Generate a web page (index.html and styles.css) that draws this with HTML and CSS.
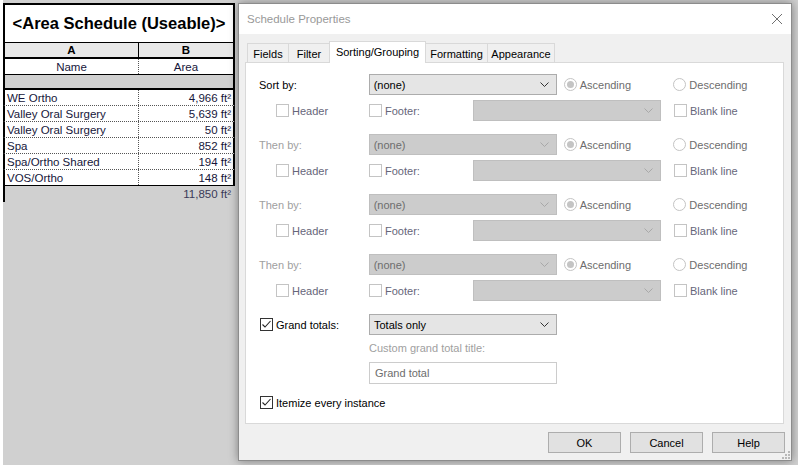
FILE: index.html
```html
<!DOCTYPE html>
<html lang="en">
<head>
<meta charset="UTF-8">
<title>Schedule Properties</title>
<link rel="stylesheet" href="styles.css">
</head>
<body>
<div class="workspace">
  <div class="schedule-pane">
    <div class="schedule">
      <div class="sched-title">&lt;Area Schedule (Useable)&gt;</div>
      <div class="sched-row sched-letters"><span>A</span><span>B</span></div>
      <div class="sched-row sched-heads"><span>Name</span><span>Area</span></div>
      <div class="sched-blank"></div>
      <div class="sched-row sched-data"><span>WE Ortho</span><span>4,966 ft²</span></div>
      <div class="sched-row sched-data"><span>Valley Oral Surgery</span><span>5,639 ft²</span></div>
      <div class="sched-row sched-data"><span>Valley Oral Surgery</span><span>50 ft²</span></div>
      <div class="sched-row sched-data"><span>Spa</span><span>852 ft²</span></div>
      <div class="sched-row sched-data"><span>Spa/Ortho Shared</span><span>194 ft²</span></div>
      <div class="sched-row sched-data last"><span>VOS/Ortho</span><span>148 ft²</span></div>
      <div class="sched-total"><span></span><span>11,850 ft²</span></div>
    </div>
  </div>

  <div class="dialog">
    <div class="titlebar">
      <span>Schedule Properties</span>
      <svg class="close" width="10" height="10" viewBox="0 0 10 10"><path d="M0 0L10 10M10 0L0 10" stroke="#707070" stroke-width="1" fill="none"/></svg>
    </div>
    <div class="dialog-body">
      <div class="tabs">
        <div class="tab t-fields">Fields</div>
        <div class="tab t-filter">Filter</div>
        <div class="tab t-sorting active">Sorting/Grouping</div>
        <div class="tab t-format">Formatting</div>
        <div class="tab t-appear">Appearance</div>
      </div>
      <div class="panel">
        <div class="sort-group">
          <div class="sort-row">
            <span class="sort-label">Sort by:</span>
            <div class="select"><span>(none)</span><svg width="9" height="5" viewBox="0 0 9 5"><path d="M0.5 0.5L4.5 4.5L8.5 0.5" stroke="#333" fill="none"/></svg></div>
            <span class="radio checked"><i class="dot"></i>Ascending</span>
            <span class="radio"><i class="dot"></i>Descending</span>
          </div>
          <div class="sort-row">
            <span class="check header"><i class="box"></i>Header</span>
            <span class="check footer"><i class="box"></i>Footer:</span>
            <div class="select off wide"><span></span><svg width="9" height="5" viewBox="0 0 9 5"><path d="M0.5 0.5L4.5 4.5L8.5 0.5" stroke="#a8a8a8" fill="none"/></svg></div>
            <span class="check blank"><i class="box"></i>Blank line</span>
          </div>
        </div>

        <div class="sort-group">
          <div class="sort-row">
            <span class="sort-label off">Then by:</span>
            <div class="select off"><span>(none)</span><svg width="9" height="5" viewBox="0 0 9 5"><path d="M0.5 0.5L4.5 4.5L8.5 0.5" stroke="#a8a8a8" fill="none"/></svg></div>
            <span class="radio checked"><i class="dot"></i>Ascending</span>
            <span class="radio"><i class="dot"></i>Descending</span>
          </div>
          <div class="sort-row">
            <span class="check header"><i class="box"></i>Header</span>
            <span class="check footer"><i class="box"></i>Footer:</span>
            <div class="select off wide"><span></span><svg width="9" height="5" viewBox="0 0 9 5"><path d="M0.5 0.5L4.5 4.5L8.5 0.5" stroke="#a8a8a8" fill="none"/></svg></div>
            <span class="check blank"><i class="box"></i>Blank line</span>
          </div>
        </div>

        <div class="sort-group">
          <div class="sort-row">
            <span class="sort-label off">Then by:</span>
            <div class="select off"><span>(none)</span><svg width="9" height="5" viewBox="0 0 9 5"><path d="M0.5 0.5L4.5 4.5L8.5 0.5" stroke="#a8a8a8" fill="none"/></svg></div>
            <span class="radio checked"><i class="dot"></i>Ascending</span>
            <span class="radio"><i class="dot"></i>Descending</span>
          </div>
          <div class="sort-row">
            <span class="check header"><i class="box"></i>Header</span>
            <span class="check footer"><i class="box"></i>Footer:</span>
            <div class="select off wide"><span></span><svg width="9" height="5" viewBox="0 0 9 5"><path d="M0.5 0.5L4.5 4.5L8.5 0.5" stroke="#a8a8a8" fill="none"/></svg></div>
            <span class="check blank"><i class="box"></i>Blank line</span>
          </div>
        </div>

        <div class="sort-group">
          <div class="sort-row">
            <span class="sort-label off">Then by:</span>
            <div class="select off"><span>(none)</span><svg width="9" height="5" viewBox="0 0 9 5"><path d="M0.5 0.5L4.5 4.5L8.5 0.5" stroke="#a8a8a8" fill="none"/></svg></div>
            <span class="radio checked"><i class="dot"></i>Ascending</span>
            <span class="radio"><i class="dot"></i>Descending</span>
          </div>
          <div class="sort-row">
            <span class="check header"><i class="box"></i>Header</span>
            <span class="check footer"><i class="box"></i>Footer:</span>
            <div class="select off wide"><span></span><svg width="9" height="5" viewBox="0 0 9 5"><path d="M0.5 0.5L4.5 4.5L8.5 0.5" stroke="#a8a8a8" fill="none"/></svg></div>
            <span class="check blank"><i class="box"></i>Blank line</span>
          </div>
        </div>

        <div class="totals-row">
          <span class="check on totals-label"><i class="box"><svg width="11" height="11" viewBox="0 0 11 11"><path d="M1.5 5.5L4 8L9.5 2" stroke="#222" stroke-width="1.1" fill="none"/></svg></i>Grand totals:</span>
          <div class="select"><span>Totals only</span><svg width="9" height="5" viewBox="0 0 9 5"><path d="M0.5 0.5L4.5 4.5L8.5 0.5" stroke="#333" fill="none"/></svg></div>
        </div>
        <div class="custom-label">Custom grand total title:</div>
        <div class="textbox">Grand total</div>
        <div class="itemize">
          <span class="check on"><i class="box"><svg width="11" height="11" viewBox="0 0 11 11"><path d="M1.5 5.5L4 8L9.5 2" stroke="#222" stroke-width="1.1" fill="none"/></svg></i>Itemize every instance</span>
        </div>
      </div>
      <div class="buttons">
        <div class="btn">OK</div>
        <div class="btn">Cancel</div>
        <div class="btn">Help</div>
      </div>
    </div>
    <svg class="grip" width="9" height="9" viewBox="0 0 9 9">
      <rect x="7" y="1" width="2" height="2" fill="#b8b8b8"/>
      <rect x="4" y="4" width="2" height="2" fill="#b8b8b8"/>
      <rect x="7" y="4" width="2" height="2" fill="#b8b8b8"/>
      <rect x="1" y="7" width="2" height="2" fill="#b8b8b8"/>
      <rect x="4" y="7" width="2" height="2" fill="#b8b8b8"/>
      <rect x="7" y="7" width="2" height="2" fill="#b8b8b8"/>
    </svg>
  </div>
</div>
</body>
</html>
```
FILE: styles.css
```css
/* styles.css */
body {
  margin: 0;
  background-color: #d0d0d0;
  font-family: 'Liberation Sans', Arial, sans-serif;
  font-size: 11px;
  color: #000;
}

.workspace {
  display: flex;
  height: 465px;
  overflow: hidden;
}

/* ---- schedule view on the left ---- */
.schedule-pane {
  flex: none;
  width: 235px;
  border-left: 3px solid #fff;
  padding-top: 3px;
  background-color: #d0d0d0;
}

.schedule {
  width: 232px;
}

.sched-title {
  height: 39px;
  box-sizing: border-box;
  border: 2px solid #000;
  background-color: #fff;
  display: flex;
  align-items: center;
  justify-content: center;
  font-weight: bold;
  font-size: 16.5px;
  border-bottom: none;
}

.sched-row {
  display: grid;
  grid-template-columns: 134px 1fr;
  border-left: 2px solid #000;
  border-right: 2px solid #000;
  background-color: #fff;
  color: #16163a;
  font-size: 11.5px;
}

.sched-row span {
  height: 14px;
  line-height: 15px;
  padding: 1px 2px 0;
  white-space: nowrap;
}

.sched-row span:first-child {
  border-right: 1px dotted #555;
}

.sched-letters {
  background-color: #e8e8e8;
  border-top: 1px solid #000;
  border-bottom: 2px solid #000;
  font-weight: bold;
  text-align: center;
  color: #000;
}

.sched-letters span {
  height: 14px;
  line-height: 14px;
  padding-top: 0;
}

.sched-letters span:first-child {
  border-right: 1px solid #000;
}

.sched-heads {
  border-bottom: 1px solid #000;
  text-align: center;
}

.sched-blank {
  height: 13px;
  border-left: 2px solid #000;
  border-right: 2px solid #000;
  border-bottom: 2px solid #000;
  background-color: #d0d0d0;
}

.sched-data {
  border-bottom: 1px dotted #555;
}

.sched-data.last {
  border-bottom: 1px solid #000;
}

.sched-data span:last-child,
.sched-total span:last-child {
  text-align: right;
}

.sched-total {
  display: grid;
  grid-template-columns: 134px 1fr;
  height: 16px;
  line-height: 17px;
  border-left: 2px solid #000;
  color: #3a3a58;
  font-size: 11.5px;
}

.sched-total span {
  padding: 0 4px 0 2px;
}

/* ---- dialog ---- */
.dialog {
  flex: none;
  position: relative;
  width: 554px;
  height: 458px;
  margin-top: 3px;
  box-sizing: border-box;
  border: 1px solid #8c8c8c;
  background-color: #f0f0f0;
  box-shadow: 0 0 9px rgba(0, 0, 0, 0.4);
  display: flex;
  flex-direction: column;
}

.titlebar {
  height: 30px;
  flex: none;
  background-color: #fff;
  display: flex;
  align-items: center;
  justify-content: space-between;
  padding: 0 9px 0 8px;
  color: #999;
  font-size: 11.5px;
}

.dialog-body {
  flex: 1;
  padding: 0 7px 7px 6px;
  display: flex;
  flex-direction: column;
}

.tabs {
  height: 28px;
  display: flex;
  align-items: flex-end;
  padding-left: 3px;
  position: relative;
  z-index: 1;
}

.tab {
  height: 19px;
  box-sizing: border-box;
  border: 1px solid #d9d9d9;
  border-bottom: none;
  margin-left: -1px;
  background-color: #f0f0f0;
  display: flex;
  align-items: center;
  justify-content: center;
  padding-top: 1px;
}

.tab.active {
  height: 22px;
  margin-bottom: -1px;
  background-color: #fff;
  padding-top: 0;
  padding-bottom: 2px;
}

.t-fields { width: 42px; }
.t-filter { width: 42px; }
.t-sorting { width: 97px; }
.t-format { width: 63px; }
.t-appear { width: 68px; }

.panel {
  height: 362px;
  box-sizing: border-box;
  border: 1px solid #d9d9d9;
  background-color: #fff;
  padding: 11px 0 0 13px;
}

.sort-group {
  margin-bottom: 13px;
}

.sort-row {
  display: flex;
  align-items: center;
  height: 21px;
}

.sort-row + .sort-row {
  margin-top: 5px;
}

.sort-label {
  width: 110px;
}

.sort-label.off {
  color: #a0a0a0;
}

.select {
  width: 188px;
  height: 21px;
  box-sizing: border-box;
  border: 1px solid #acacac;
  background-color: #e5e5e5;
  display: flex;
  align-items: center;
  justify-content: space-between;
  padding: 0 7px 0 4px;
  flex: none;
}

.select.off {
  background-color: #cccccc;
  border-color: #bfbfbf;
  color: #6d6d6d;
}

.radio {
  width: 110px;
  display: flex;
  align-items: center;
  color: #6d6d6d;
}

.select + .radio {
  margin-left: 7px;
}

.dot {
  width: 13px;
  height: 13px;
  box-sizing: border-box;
  border: 1px solid #c4c4c4;
  border-radius: 50%;
  margin-right: 3px;
  display: flex;
  align-items: center;
  justify-content: center;
}

.radio.checked .dot::after {
  content: '';
  width: 7px;
  height: 7px;
  border-radius: 50%;
  background-color: #c4c4c4;
}

.check {
  display: flex;
  align-items: center;
  color: #66667a;
  box-sizing: border-box;
}

.check.header {
  width: 110px;
  padding-left: 17px;
}

.check.footer {
  width: 104px;
}

.check.blank {
  margin-left: 13px;
}

.box {
  width: 13px;
  height: 13px;
  box-sizing: border-box;
  border: 1px solid #c4c4c4;
  background-color: #fff;
  margin-right: 3px;
  display: flex;
  align-items: center;
  justify-content: center;
  flex: none;
}

.check.on {
  color: #000;
}

.check.on .box {
  border-color: #333;
}

.totals-row {
  display: flex;
  align-items: center;
  height: 21px;
  margin-top: 3px;
}

.totals-label {
  width: 110px;
  padding-left: 1px;
}

.custom-label {
  margin: 7px 0 0 110px;
  height: 13px;
  line-height: 13px;
  color: #a0a0a0;
}

.textbox {
  margin: 7px 0 0 110px;
  width: 188px;
  height: 22px;
  box-sizing: border-box;
  border: 1px solid #cccccc;
  color: #6d6d6d;
  padding-left: 5px;
  display: flex;
  align-items: center;
}

.itemize {
  margin-top: 11px;
  height: 15px;
  display: flex;
  align-items: center;
  padding-left: 1px;
}

.buttons {
  display: flex;
  justify-content: flex-end;
  gap: 9px;
  margin-top: 8px;
  margin-right: -1px;
}

.btn {
  width: 73px;
  height: 21px;
  box-sizing: border-box;
  border: 1px solid #adadad;
  background-color: #e1e1e1;
  display: flex;
  align-items: center;
  justify-content: center;
}

.grip {
  position: absolute;
  right: 1px;
  bottom: 1px;
}
```
